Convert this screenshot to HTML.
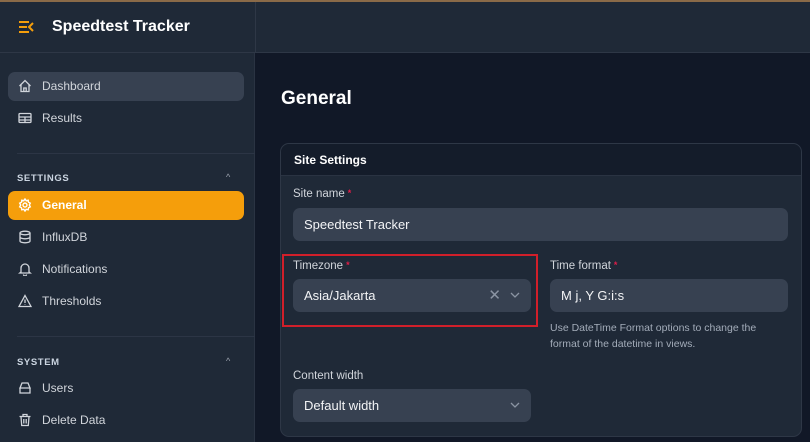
<!DOCTYPE html>
<html><head><meta charset="utf-8"><style>
*{box-sizing:border-box;margin:0;padding:0}
body{width:810px;height:442px;overflow:hidden;background:#111827;font-family:"Liberation Sans",sans-serif;color:#e5e7eb;position:relative}
.topline{position:absolute;left:0;top:0;width:810px;height:2px;background:#8a6a48}
.header{position:absolute;left:0;top:2px;width:810px;height:51px;background:#1f2937;border-bottom:1px solid #2e3746}
.hsep{position:absolute;left:255px;top:2px;width:1px;height:51px;background:#2e3746}
.side{position:absolute;left:0;top:53px;width:255px;height:389px;background:#1f2937;border-right:1px solid #2a3342}
.brand{position:absolute;left:52px;top:18px;font-size:16px;font-weight:bold;color:#fff}
.item{position:absolute;left:8px;width:236px;height:29px;border-radius:7px;font-size:12px;color:#d1d5db;padding-left:34px;line-height:29px}
.item svg{position:absolute;left:10px;top:7px}
.sec{position:absolute;left:17px;font-size:9.5px;font-weight:bold;letter-spacing:.6px;color:#cbd5e1}
.car{position:absolute;left:226px;font-size:9px;color:#9ca3af}
.hr{position:absolute;left:17px;width:238px;height:1px;background:#2c3545}
h1{position:absolute;left:281px;top:88px;font-size:19px;font-weight:bold;color:#fff}
.card{position:absolute;left:280px;top:143px;width:522px;height:294px;border:1px solid #2e3746;border-radius:9px;background:#1f2937;overflow:hidden}
.ch{height:32px;background:#141c2a;border-bottom:1px solid #2a3342;padding:9px 13px;font-size:12px;font-weight:bold;color:#fff}
.lab{position:absolute;font-size:11.5px;color:#d1d5db}
.lab b{color:#e11d48;font-size:9px;vertical-align:top;margin-left:3px}
.inp{position:absolute;height:33px;background:#374151;border-radius:7px;font-size:13px;color:#f3f4f6;padding-left:11px;line-height:33px}
.help{position:absolute;left:550px;top:320px;font-size:10.5px;line-height:16px;color:#a3acb9;width:232px}
.red{position:absolute;left:282px;top:254px;width:256px;height:73px;border:2px solid #d11f2a}
</style></head><body>
<div class="header"></div><div class="topline"></div><div class="hsep"></div>
<svg style="position:absolute;left:18px;top:20px" width="17" height="14" viewBox="0 0 17 14" fill="none" stroke="#f59e0b" stroke-width="2"><path d="M1 2h10M1 7h8M1 12h10M15 3l-4 4 4 4"/></svg>
<div class="brand">Speedtest Tracker</div>
<div class="side">
<div class="item" style="top:19px;background:#374151">
<svg width="14" height="14" viewBox="0 0 14 14" fill="none" stroke="#d1d5db" stroke-width="1.3"><path d="M1.5 7L7 1.5 12.5 7M3 5.5V12.5h8V5.5M5.8 12.5V9h2.4v3.5"/></svg>Dashboard</div>
<div class="item" style="top:51px"><svg width="14" height="14" viewBox="0 0 14 14" fill="none" stroke="#d1d5db" stroke-width="1.3"><rect x="1" y="2.5" width="12" height="9" rx="1"/><path d="M1 6h12M1 9h12M7 6v5.5"/></svg>Results</div>
<div class="hr" style="top:100px"></div>
<div class="sec" style="top:120px">SETTINGS</div><div class="car" style="top:119px">^</div>
<div class="item" style="top:138px;background:#f59e0b;color:#fff;font-weight:bold"><svg width="14" height="14" viewBox="0 0 14 14" fill="none" stroke="#fff" stroke-width="1.4"><circle cx="7" cy="7" r="2"/><path d="M7 1l1.2 1.7 2-.5.3 2 1.8 1L11.3 7l1 1.8-1.8 1-.3 2-2-.5L7 13l-1.2-1.7-2 .5-.3-2-1.8-1L2.7 7l-1-1.8 1.8-1 .3-2 2 .5z"/></svg>General</div>
<div class="item" style="top:170px"><svg width="14" height="14" viewBox="0 0 14 14" fill="none" stroke="#d1d5db" stroke-width="1.3"><ellipse cx="7" cy="3" rx="5" ry="1.8"/><path d="M2 3v8c0 1 2.2 1.8 5 1.8s5-.8 5-1.8V3M2 7c0 1 2.2 1.8 5 1.8S12 8 12 7"/></svg>InfluxDB</div>
<div class="item" style="top:202px"><svg width="14" height="14" viewBox="0 0 14 14" fill="none" stroke="#d1d5db" stroke-width="1.3"><path d="M3 10V6a4 4 0 018 0v4l1.2 1H1.8zM5.5 12.5a1.5 1.5 0 003 0"/></svg>Notifications</div>
<div class="item" style="top:234px"><svg width="14" height="14" viewBox="0 0 14 14" fill="none" stroke="#d1d5db" stroke-width="1.3"><path d="M7 1.5L13 12.5H1zM7 5.5v3.5M7 10.5v.5"/></svg>Thresholds</div>
<div class="hr" style="top:283px"></div>
<div class="sec" style="top:304px">SYSTEM</div><div class="car" style="top:303px">^</div>
<div class="item" style="top:321px"><svg width="14" height="14" viewBox="0 0 14 14" fill="none" stroke="#d1d5db" stroke-width="1.3"><path d="M4 2h6l2 5H2zM2 7h10v5H2z"/></svg>Users</div>
<div class="item" style="top:353px"><svg width="14" height="14" viewBox="0 0 14 14" fill="none" stroke="#d1d5db" stroke-width="1.3"><path d="M1.5 3.5h11M5 3.5V1.5h4v2M3 3.5l.7 9h6.6l.7-9M5.8 6v4.5M8.2 6v4.5"/></svg>Delete Data</div>
</div>
<h1>General</h1>
<div class="card"><div class="ch">Site Settings</div></div>
<div class="lab" style="left:293px;top:188px">Site name<b>*</b></div>
<div class="inp" style="left:293px;top:208px;width:495px">Speedtest Tracker</div>
<div class="lab" style="left:293px;top:260px">Timezone<b>*</b></div>
<div class="inp" style="left:293px;top:279px;width:238px">Asia/Jakarta<span style="position:absolute;right:30px;color:#8b94a3;font-size:15px">✕</span><svg style="position:absolute;right:11px;top:13px" width="10" height="7" viewBox="0 0 10 7" fill="none" stroke="#8b94a3" stroke-width="1.3"><path d="M1 1l4 4 4-4"/></svg></div>
<div class="lab" style="left:550px;top:260px">Time format<b>*</b></div>
<div class="inp" style="left:550px;top:279px;width:238px">M j, Y G:i:s</div>
<div class="help">Use DateTime Format options to change the format of the datetime in views.</div>
<div class="lab" style="left:293px;top:370px">Content width</div>
<div class="inp" style="left:293px;top:389px;width:238px">Default width<svg style="position:absolute;right:11px;top:13px" width="10" height="7" viewBox="0 0 10 7" fill="none" stroke="#8b94a3" stroke-width="1.3"><path d="M1 1l4 4 4-4"/></svg></div>
<div class="red"></div>
</body></html>
